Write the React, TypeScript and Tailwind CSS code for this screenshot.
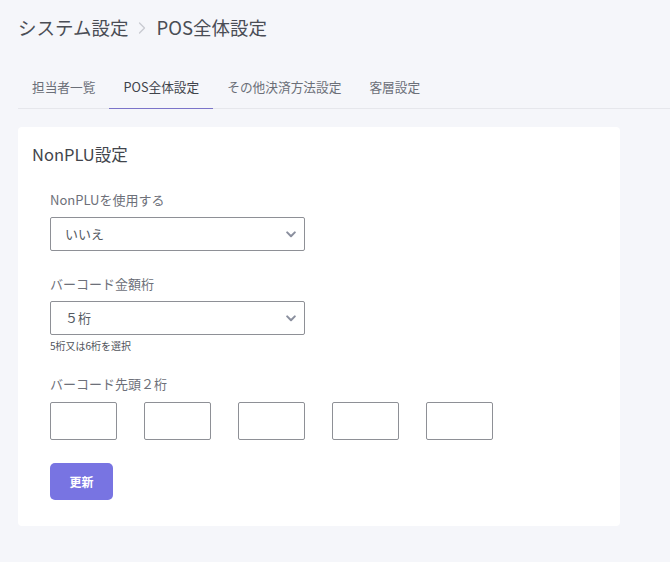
import { ChevronRight } from 'lucide-react';

const tabs = ['担当者一覧', 'POS全体設定', 'その他決済方法設定', '客層設定'];

function Select({ value }: { value: string }) {
  return (
    <div className="w-[255px] h-[34px] border border-[#8e9096] rounded-[2px] bg-white flex items-center justify-between pl-[14px] pr-[7px]">
      <span className="text-[13px] text-[#555a63]">{value}</span>
      <svg width="10" height="7" viewBox="0 0 10 7" className="mr-[1px]">
        <path d="M1.2 1.4 L5 5.2 L8.8 1.4" fill="none" stroke="#8a8f9e" strokeWidth="2" strokeLinecap="round" strokeLinejoin="round" />
      </svg>
    </div>
  );
}

export default function App() {
  return (
    <div
      className="w-[670px] h-[562px] bg-[#f5f6fa] overflow-hidden"
      style={{ fontFamily: '"Noto Sans CJK JP", "Noto Sans", sans-serif' }}
    >
      {/* breadcrumb */}
      <div className="flex items-center h-[56px] pl-[18px] text-[18.5px] text-[#4a4d55]">
        <span>システム設定</span>
        <ChevronRight className="w-[20px] h-[20px] text-[#c8cad0] mx-[4px]" strokeWidth={1.5} />
        <span>POS全体設定</span>
      </div>

      {/* tabs */}
      <div className="ml-[18px] mt-[9px] flex border-b border-[#e6e7ec] h-[44px]">
        {tabs.map((t, i) => (
          <div
            key={t}
            className={
              'px-[14px] flex items-center text-[12.7px] -mb-px ' +
              (i === 1 ? 'text-[#3f434b] border-b-[1.5px] border-[#7b74c9]' : 'text-[#6b6f78]')
            }
          >
            {t}
          </div>
        ))}
      </div>

      {/* card */}
      <div className="ml-[18px] mt-[18px] w-[602px] h-[399px] bg-white rounded-[4px] pl-[14px] pt-[16px]">
        <h2 className="text-[16.5px] text-[#42454c] leading-[22px]">NonPLU設定</h2>

        <div className="pl-[18px] pt-[26px]">
          <div className="text-[13px] text-[#6d7079] leading-[18px] mb-[8px]">NonPLUを使用する</div>
          <Select value="いいえ" />

          <div className="text-[13px] text-[#6d7079] leading-[18px] mt-[24px] mb-[8px]">バーコード金額桁</div>
          <Select value="５桁" />
          <div className="text-[10px] text-[#4f535b] leading-[14px] mt-[4px]">5桁又は6桁を選択</div>

          <div className="text-[13px] text-[#6d7079] leading-[18px] mt-[22px] mb-[9px]">バーコード先頭２桁</div>
          <div className="flex gap-[27px]">
            {[0, 1, 2, 3, 4].map((i) => (
              <div key={i} className="w-[67px] h-[38px] border border-[#8e9096] rounded-[2px] bg-white" />
            ))}
          </div>

          <button className="mt-[23px] w-[63px] h-[37px] rounded-[5px] bg-[#7874e2] text-white text-[12px] font-bold">
            更新
          </button>
        </div>
      </div>
    </div>
  );
}
